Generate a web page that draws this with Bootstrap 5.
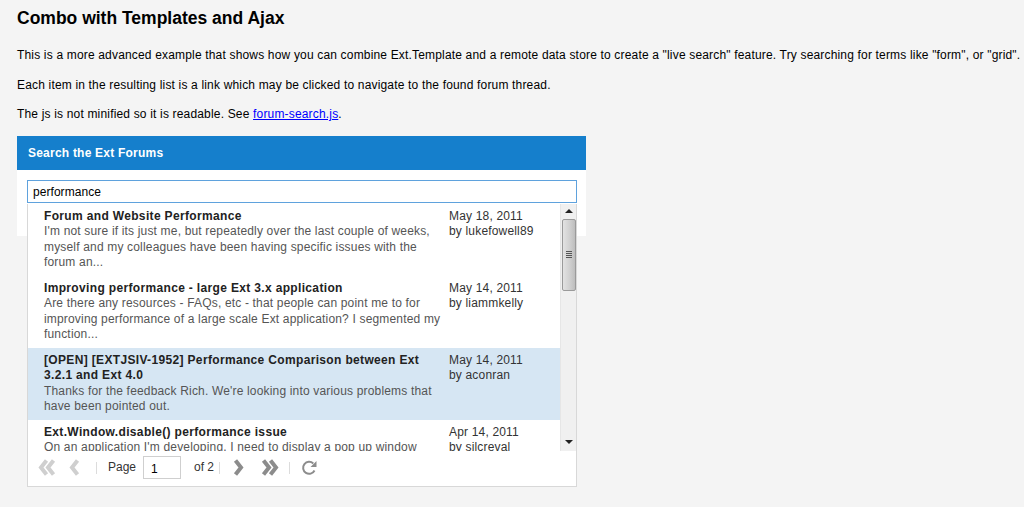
<!DOCTYPE html>
<html lang="en">
<head>
<meta charset="utf-8">
<title>Combo with Templates and Ajax</title>
<link href="https://cdn.jsdelivr.net/npm/bootstrap@5.3.0/dist/css/bootstrap.min.css" rel="stylesheet">
<style>
html,body{height:100%;}
body{background:#f4f4f4;color:#000;font:12px/15px "Liberation Sans",Arial,sans-serif;letter-spacing:.172px;padding:10px 17px 0;overflow:hidden;}
.pg-title{font:bold 17.5px/18px "Liberation Sans",Arial,sans-serif;letter-spacing:0;margin:-1px 0 21px;}
.pg-text{margin:0 0 14.500px;white-space:nowrap;}
.pg-text:last-of-type{margin-bottom:13.500px;}
.pg-text a{color:#00f;}
.srch-wrap{position:relative;width:569px;}
.srch-head{background:#157fcc;color:#fff;font-weight:bold;font-size:12px;line-height:15px;padding:10px 11px 9px;height:34px;letter-spacing:.22px;}
.srch-body{background:#fff;height:66px;padding:10px;}
.srch-input{display:block;width:550px;height:23px;border:1px solid #5fa2dd;padding:1px 5px 0;font:12px/20px "Liberation Sans",Arial,sans-serif;letter-spacing:.05px;color:#000;background:#fff;border-radius:0;outline:0;}
.srch-drop{position:absolute;left:10px;top:68px;width:550px;height:283px;background:#fff;border:1px solid #d8d8d8;border-top:0;}
.res-scroll{height:247px;overflow:hidden;position:relative;padding-right:16px;}
.res-item{display:flex;padding:5px 0 5px 16px;color:#555;line-height:15.500px;height:72px;}
.res-item.hl{background:#d6e6f3;}
.res-main{width:405px;flex:none;}
.res-main h3{font:bold 12px/15.500px "Liberation Sans",Arial,sans-serif;letter-spacing:.34px;color:#222;margin:0;}
.res-side{color:#333;white-space:nowrap;}
.sbar{position:absolute;right:0;top:0;width:16px;height:247px;background:#f0f0f0;border-left:1px solid #e6e6e6;}
.sbar-thumb{position:absolute;left:1px;top:15px;width:14px;height:72px;background:linear-gradient(90deg,#e2e2e2,#d2d2d2 50%,#bdbdbd);border:1px solid #9a9a9a;border-radius:2px;}
.sbar svg{position:absolute;left:4px;}
.pager{height:36px;display:flex;align-items:center;padding:0 0 2px 10px;color:#333;letter-spacing:0;}
.pg-ic{display:block;flex:none;}
.pg-sep{width:1px;height:12px;background:#dcdcdc;flex:none;}
.pg-lbl{margin-top:-1px;}
.pg-num{width:38px;height:23px;border:1px solid #cfcfcf;padding:3px 7px 0;font:12px/15px "Liberation Sans",Arial,sans-serif;color:#000;border-radius:0;margin:0 13px 0 7px;background:#fff;outline:0;}
</style>
</head>
<body>
<h1 class="pg-title">Combo with Templates and Ajax</h1>
<p class="pg-text">This is a more advanced example that shows how you can combine Ext.Template and a remote data store to create a "live search" feature. Try searching for terms like "form", or "grid".</p>
<p class="pg-text">Each item in the resulting list is a link which may be clicked to navigate to the found forum thread.</p>
<p class="pg-text">The js is not minified so it is readable. See <a href="#">forum-search.js</a>.</p>
<div class="srch-wrap">
  <div class="srch-head">Search the Ext Forums</div>
  <div class="srch-body"><input class="srch-input" type="text" value="performance" aria-label="Search"></div>
  <div class="srch-drop">
    <div class="res-scroll">
      <div class="res-item"><div class="res-main"><h3>Forum and Website Performance</h3>I'm not sure if its just me, but repeatedly over the last couple of weeks, myself and my colleagues have been having specific issues with the forum an...</div><div class="res-side">May 18, 2011<br>by lukefowell89</div></div>
      <div class="res-item"><div class="res-main"><h3>Improving performance - large Ext 3.x application</h3>Are there any resources - FAQs, etc - that people can point me to for improving performance of a large scale Ext application? I segmented my function...</div><div class="res-side">May 14, 2011<br>by liammkelly</div></div>
      <div class="res-item hl"><div class="res-main"><h3>[OPEN] [EXTJSIV-1952] Performance Comparison between Ext 3.2.1 and Ext 4.0</h3>Thanks for the feedback Rich. We're looking into various problems that have been pointed out.</div><div class="res-side">May 14, 2011<br>by aconran</div></div>
      <div class="res-item"><div class="res-main"><h3>Ext.Window.disable() performance issue</h3>On an application I'm developing, I need to display a pop up window</div><div class="res-side">Apr 14, 2011<br>by silcreval</div></div>
      <div class="sbar">
        <svg style="top:5px" width="8" height="5" viewBox="0 0 8 5"><path d="M4 0 8 4H0z" fill="#222"/></svg>
        <div class="sbar-thumb"><svg style="top:31px;left:3px" width="7" height="8" viewBox="0 0 7 8"><path d="M0 .5h6M0 2.500h6M0 4.500h6M0 6.500h6" stroke="#555"/></svg></div>
        <svg style="top:236px" width="8" height="5" viewBox="0 0 8 5"><path d="M4 4 8 0H0z" fill="#222"/></svg>
      </div>
    </div>
    <div class="pager">
      <svg class="pg-ic" style="margin-right:13px" width="18" height="17" viewBox="0 0 18 17"><path d="M8.500 1.500 3 8.500 8.500 15.500M15.500 1.500 10 8.500 15.500 15.500" fill="none" stroke="#cfcfcf" stroke-width="4"/></svg>
      <svg class="pg-ic" style="margin-right:16px" width="11" height="17" viewBox="0 0 11 17"><path d="M8.500 1.500 3 8.500 8.500 15.500" fill="none" stroke="#cfcfcf" stroke-width="4"/></svg>
      <span class="pg-sep" style="margin-right:11px"></span>
      <span class="pg-lbl">Page</span>
      <input class="pg-num" type="text" value="1" aria-label="Page">
      <span class="pg-lbl">of 2</span>
      <span class="pg-sep" style="margin:0 13px 0 5px"></span>
      <svg class="pg-ic" style="margin-right:17px" width="11" height="17" viewBox="0 0 11 17"><path d="M2.500 1.500 8 8.500 2.500 15.500" fill="none" stroke="#8c8c8c" stroke-width="4"/></svg>
      <svg class="pg-ic" style="margin-right:10px" width="18" height="17" viewBox="0 0 18 17"><path d="M2.500 1.500 8 8.500 2.500 15.500M9.500 1.500 15 8.500 9.500 15.500" fill="none" stroke="#8c8c8c" stroke-width="4"/></svg>
      <span class="pg-sep" style="margin-right:11px"></span>
      <svg class="pg-ic" width="16" height="16" viewBox="0 0 16 16"><path d="M13.500 10.500A6 6 0 1 1 12.300 3.500" fill="none" stroke="#8c8c8c" stroke-width="2"/><path d="M15.500 1v6H9.500z" fill="#8c8c8c"/></svg>
    </div>
  </div>
</div>
<script src="https://cdn.jsdelivr.net/npm/bootstrap@5.3.0/dist/js/bootstrap.bundle.min.js"></script>
</body>
</html>
